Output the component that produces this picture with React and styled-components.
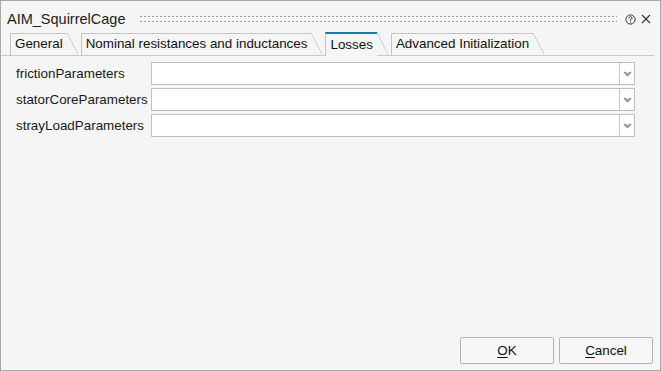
import React from 'react';
import styled, { createGlobalStyle } from 'styled-components';

const Global = createGlobalStyle`
  html, body { margin: 0; padding: 0; background: #fff; }
  * { box-sizing: border-box; }
`;

const Window = styled.div`
  width: 661px;
  height: 371px;
  border: 1px solid #a8a8a8;
  background: #f5f5f5;
  display: flex;
  flex-direction: column;
  font-family: "Liberation Sans", Arial, sans-serif;
  font-size: 13.4px;
  color: #1a1a1a;
`;

const TitleBar = styled.div`
  height: 30px;
  display: flex;
  align-items: center;
  padding: 0 9px 0 6px;
`;

const Title = styled.div`
  font-size: 14.5px;
  color: #222;
  padding-top: 6px;
`;

const Grip = styled.div`
  flex: 1;
  height: 10px;
  margin: 6px 8px 0 14px;
  background-image: radial-gradient(circle, #9a9a9a 0.7px, transparent 1.1px);
  background-size: 4px 5px;
  background-position: 0 0;
`;

const TitleIcon = styled.svg`
  margin-top: 6px;
  margin-left: ${p => p.$gap || 0}px;
`;

const TabStrip = styled.div`
  height: 25px;
  display: flex;
  align-items: flex-end;
  padding-left: 9px;
  margin-right: 6px;
  border-bottom: 1px solid #c8c8c8;
`;

const Tab = styled.div`
  position: relative;
  height: ${p => (p.$active ? 24 : 22)}px;
  padding: ${p => (p.$active ? 3 : 2)}px 4px 0 4px;
  margin-right: 14px;
  margin-bottom: ${p => (p.$active ? -1 : 0)}px;
  background: #f5f5f5;
  border-left: 1px solid #c4c4c4;
  border-top: ${p => (p.$active ? '2px solid #1479b0' : '1px solid #c4c4c4')};
  white-space: nowrap;
  color: #111;

  &::after {
    content: '';
    position: absolute;
    top: ${p => (p.$active ? -2 : -1)}px;
    right: -11px;
    width: 11px;
    height: calc(100% + ${p => (p.$active ? 1 : 0)}px);
    background: linear-gradient(
      to top right,
      transparent calc(50% - 0.7px),
      #c4c4c4 50%,
      transparent calc(50% + 0.7px)
    );
  }
`;

const Content = styled.div`
  flex: 1;
  padding: 6px 25px 0 15px;
  display: flex;
  flex-direction: column;
  gap: 3px;
`;

const Row = styled.div`
  display: grid;
  grid-template-columns: 135px 1fr;
  align-items: center;
  height: 23px;
`;

const Label = styled.div`
  color: #1a1a1a;
  white-space: nowrap;
`;

const Combo = styled.div`
  height: 23px;
  display: flex;
  background: #fff;
  border: 1px solid #c0c0c0;
`;

const ComboText = styled.div`
  flex: 1;
`;

const ComboButton = styled.div`
  width: 15px;
  border-left: 1px solid #c8c8c8;
  display: flex;
  align-items: center;
  justify-content: center;
`;

const Footer = styled.div`
  display: flex;
  justify-content: flex-end;
  gap: 5px;
  padding: 0 7px 6px 0;
`;

const Button = styled.button`
  width: 94px;
  height: 27px;
  border: 1px solid #b4b4b4;
  border-radius: 2px;
  background: #f7f7f7;
  font-family: "Liberation Sans", Arial, sans-serif;
  font-size: 13.4px;
  color: #111;
  padding: 0;
  u { text-decoration: underline; text-underline-offset: 2px; }
`;

const Chevron = () => (
  <svg width="9" height="6" viewBox="0 0 9 6">
    <path d="M1 1 L4.5 4.5 L8 1" fill="none" stroke="#8a8a8a" strokeWidth="1.4" />
    <path d="M2.5 1 L4.5 3 L6.5 1" fill="none" stroke="#8a8a8a" strokeWidth="1" />
  </svg>
);

const fields = ['frictionParameters', 'statorCoreParameters', 'strayLoadParameters'];

export default function App() {
  return (
    <>
      <Global />
      <Window>
        <TitleBar>
          <Title>AIM_SquirrelCage</Title>
          <Grip />
          <TitleIcon width="11" height="11" viewBox="0 0 11 11">
            <circle cx="5.5" cy="5.5" r="4.6" fill="none" stroke="#333" strokeWidth="1" />
            <path d="M3.9 4.3 Q3.9 2.8 5.5 2.8 Q7.1 2.8 7.1 4.1 Q7.1 5 5.5 5.6 L5.5 6.6" fill="none" stroke="#333" strokeWidth="1" />
            <circle cx="5.5" cy="8.1" r="0.6" fill="#333" />
          </TitleIcon>
          <TitleIcon $gap={5} width="10" height="10" viewBox="0 0 10 10">
            <path d="M1 1 L9 9 M9 1 L1 9" stroke="#333" strokeWidth="1.1" />
          </TitleIcon>
        </TitleBar>
        <TabStrip>
          <Tab>General</Tab>
          <Tab>Nominal resistances and inductances</Tab>
          <Tab $active>Losses</Tab>
          <Tab>Advanced Initialization</Tab>
        </TabStrip>
        <Content>
          {fields.map(f => (
            <Row key={f}>
              <Label>{f}</Label>
              <Combo>
                <ComboText />
                <ComboButton>
                  <Chevron />
                </ComboButton>
              </Combo>
            </Row>
          ))}
        </Content>
        <Footer>
          <Button><u>O</u>K</Button>
          <Button><u>C</u>ancel</Button>
        </Footer>
      </Window>
    </>
  );
}
